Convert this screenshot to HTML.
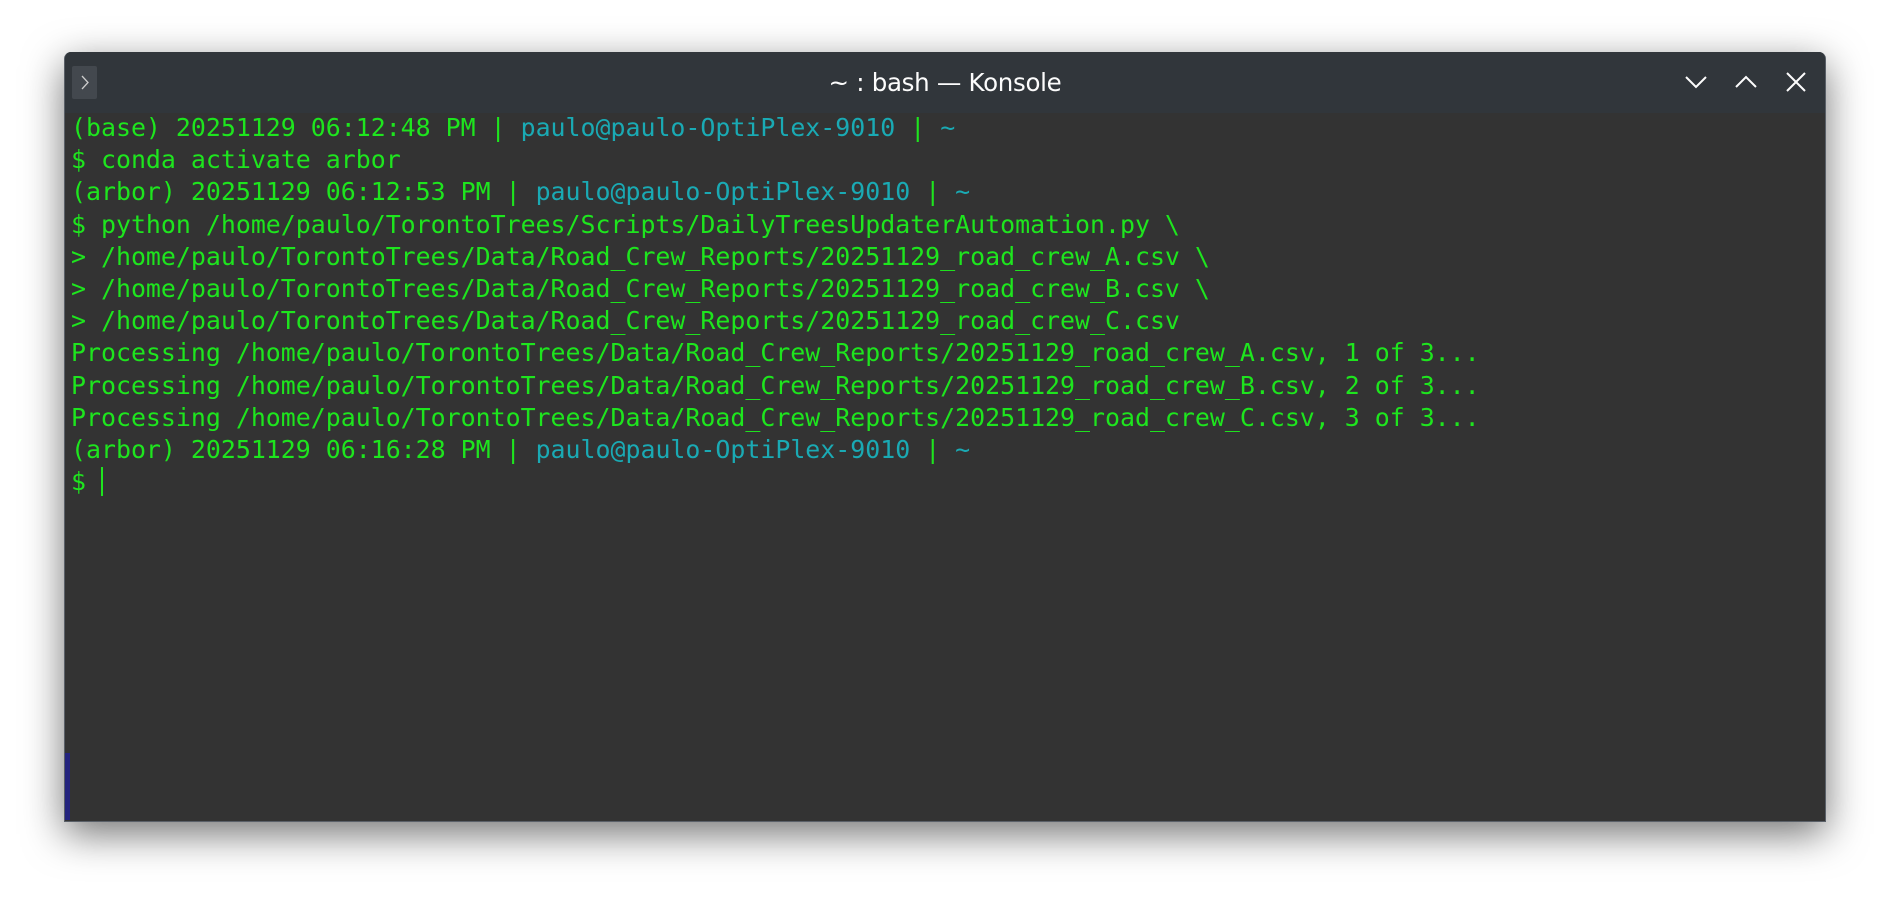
<!DOCTYPE html>
<html><head><meta charset="utf-8"><style>
html,body{margin:0;padding:0;background:#fff;width:1891px;height:899px;overflow:hidden}
.win{position:absolute;left:64px;top:52px;width:1762px;height:770px;background:#333;border-radius:7px 7px 0 0;box-shadow:0 12px 40px rgba(0,0,0,.55);border:1px solid #5a6068;border-top:none;box-sizing:border-box;overflow:hidden}
.tb{position:absolute;left:0;top:0;right:0;height:61px;background:#31363b}
.title{position:absolute;left:0;right:0;top:16px;text-align:center;color:#fcfcfc;font:24.5px "DejaVu Sans","Liberation Sans",sans-serif;letter-spacing:-0.3px}
.lbtn{position:absolute;left:7px;top:14px;width:25px;height:33px;background:#43484e;border-radius:2px}
.term{position:absolute;left:6px;top:60px;font:24.9px/32.2px "DejaVu Sans Mono","Liberation Mono",monospace;color:#1ee51e;white-space:pre}
.c{color:#1aaab4}
.cur{display:inline-block;width:2px;height:29px;background:#1ee51e;vertical-align:-6px}
.blue{position:absolute;left:0;top:701px;width:5px;height:67px;background:#24247e}
</style></head><body>
<div class="win">
<div class="tb">
<div class="lbtn"><svg width="25" height="33"><path d="M10 10 L16 16.5 L10 23" stroke="#ccc" stroke-width="1.3" fill="none"/></svg></div>
<div class="title">~ : bash — Konsole</div>
<svg style="position:absolute;left:1620px;top:18px" width="130" height="26">
<path d="M1 7 L11 17 L21 7" stroke="#fcfcfc" stroke-width="2" fill="none"/>
<path d="M51 17 L61 7 L71 17" stroke="#fcfcfc" stroke-width="2" fill="none"/>
<path d="M102 3 L120 21 M120 3 L102 21" stroke="#fcfcfc" stroke-width="2" fill="none"/>
</svg>
</div>
<div class="term">(base) 20251129 06:12:48 PM | <span class="c">paulo@paulo-OptiPlex-9010</span> | <span class="c">~</span>
$ conda activate arbor
(arbor) 20251129 06:12:53 PM | <span class="c">paulo@paulo-OptiPlex-9010</span> | <span class="c">~</span>
$ python /home/paulo/TorontoTrees/Scripts/DailyTreesUpdaterAutomation.py \
&gt; /home/paulo/TorontoTrees/Data/Road_Crew_Reports/20251129_road_crew_A.csv \
&gt; /home/paulo/TorontoTrees/Data/Road_Crew_Reports/20251129_road_crew_B.csv \
&gt; /home/paulo/TorontoTrees/Data/Road_Crew_Reports/20251129_road_crew_C.csv
Processing /home/paulo/TorontoTrees/Data/Road_Crew_Reports/20251129_road_crew_A.csv, 1 of 3...
Processing /home/paulo/TorontoTrees/Data/Road_Crew_Reports/20251129_road_crew_B.csv, 2 of 3...
Processing /home/paulo/TorontoTrees/Data/Road_Crew_Reports/20251129_road_crew_C.csv, 3 of 3...
(arbor) 20251129 06:16:28 PM | <span class="c">paulo@paulo-OptiPlex-9010</span> | <span class="c">~</span>
$ <span class="cur"></span></div>
<div class="blue"></div>
</div>
</body></html>
